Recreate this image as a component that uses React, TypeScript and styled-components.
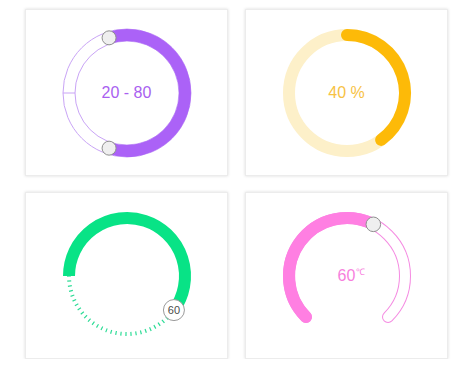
import React from 'react'
import styled, { createGlobalStyle } from 'styled-components'

const GlobalStyle = createGlobalStyle`
  body {
    margin: 0;
    background: #ffffff;
    font-family: 'Liberation Sans', Arial, sans-serif;
  }
`

const Board = styled.div`
  display: grid;
  grid-template-columns: 203px 203px;
  grid-auto-rows: 167px;
  column-gap: 17px;
  row-gap: 16px;
  padding: 9px 0 0 25px;
`

const Card = styled.div`
  position: relative;
  display: flex;
  justify-content: center;
  align-items: center;
  background: #ffffff;
  border: 1px solid #ececec;
  box-shadow: 0 0 3px rgba(0, 0, 0, 0.14);
  box-sizing: border-box;
`

const Dial = styled.div`
  position: relative;
  width: 140px;
  height: 140px;
`

const Readout = styled.div<{ $color: string }>`
  position: absolute;
  left: 0;
  right: 0;
  top: 50%;
  transform: translateY(-50%);
  text-align: center;
  font-size: 16px;
  line-height: 18px;
  color: ${(p) => p.$color};
`

const Unit = styled.span`
  position: absolute;
  margin-left: 1px;
  margin-top: -4px;
  font-size: 9px;
`

const C = 70
const R = 58

const pt = (deg: number, r = R) => {
  const a = (deg * Math.PI) / 180
  return [C + r * Math.sin(a), C - r * Math.cos(a)]
}

const arc = (from: number, to: number, r = R) => {
  const [x1, y1] = pt(from, r)
  const [x2, y2] = pt(to, r)
  const large = to - from > 180 ? 1 : 0
  return `M ${x1} ${y1} A ${r} ${r} 0 ${large} 1 ${x2} ${y2}`
}

const Knob = ({ deg, r = 7 }: { deg: number; r?: number }) => {
  const [x, y] = pt(deg)
  return <circle cx={x} cy={y} r={r} fill="#efefef" stroke="#8f8f8f" strokeWidth={1} />
}

const RangeDial = () => (
  <Dial>
    <svg width="140" height="140">
      <circle cx={C} cy={C} r={64} fill="none" stroke="#c9a4f6" strokeWidth={1} />
      <circle cx={C} cy={C} r={52} fill="none" stroke="#c9a4f6" strokeWidth={1} />
      <line x1={6} y1={C} x2={18} y2={C} stroke="#c9a4f6" strokeWidth={1} />
      <path d={arc(-18, 198)} fill="none" stroke="#ab62f7" strokeWidth={12} />
      <Knob deg={-18} />
      <Knob deg={198} />
    </svg>
    <Readout $color="#a95ff0">20 - 80</Readout>
  </Dial>
)

const PercentDial = () => (
  <Dial>
    <svg width="140" height="140">
      <circle cx={C} cy={C} r={R} fill="none" stroke="#fdf0c9" strokeWidth={12} />
      <path d={arc(0, 144)} fill="none" stroke="#fdba08" strokeWidth={12} strokeLinecap="round" />
    </svg>
    <Readout $color="#f7c244">40 %</Readout>
  </Dial>
)

const TickDial = () => {
  const [bx, by] = pt(126)
  return (
    <Dial>
      <svg width="140" height="140">
        <path d={arc(126, 270)} fill="none" stroke="#2ddc96" strokeWidth={4} strokeDasharray="1.2 3.8" />
        <path d={arc(-90, 126)} fill="none" stroke="#08e386" strokeWidth={12} />
        <circle cx={bx} cy={by} r={10.5} fill="#ffffff" stroke="#9a9a9a" strokeWidth={1} />
        <text
          x={bx}
          y={by + 4}
          textAnchor="middle"
          fontSize="11"
          fill="#4a4a4a"
          fontFamily="'Liberation Sans', Arial, sans-serif"
        >
          60
        </text>
      </svg>
    </Dial>
  )
}

const TempDial = () => (
  <Dial>
    <svg width="140" height="140">
      <path d={arc(-135, 135)} fill="none" stroke="#f58be2" strokeWidth={12} strokeLinecap="round" />
      <path d={arc(-135, 135)} fill="none" stroke="#ffffff" strokeWidth={10} strokeLinecap="round" />
      <path d={arc(-135, 27)} fill="none" stroke="#ff7fe2" strokeWidth={12} strokeLinecap="round" />
      <Knob deg={27} r={7.3} />
    </svg>
    <Readout $color="#f77fdd">
      60<Unit>℃</Unit>
    </Readout>
  </Dial>
)

export default function App() {
  return (
    <>
      <GlobalStyle />
      <Board>
        <Card>
          <RangeDial />
        </Card>
        <Card>
          <PercentDial />
        </Card>
        <Card>
          <TickDial />
        </Card>
        <Card>
          <TempDial />
        </Card>
      </Board>
    </>
  )
}
